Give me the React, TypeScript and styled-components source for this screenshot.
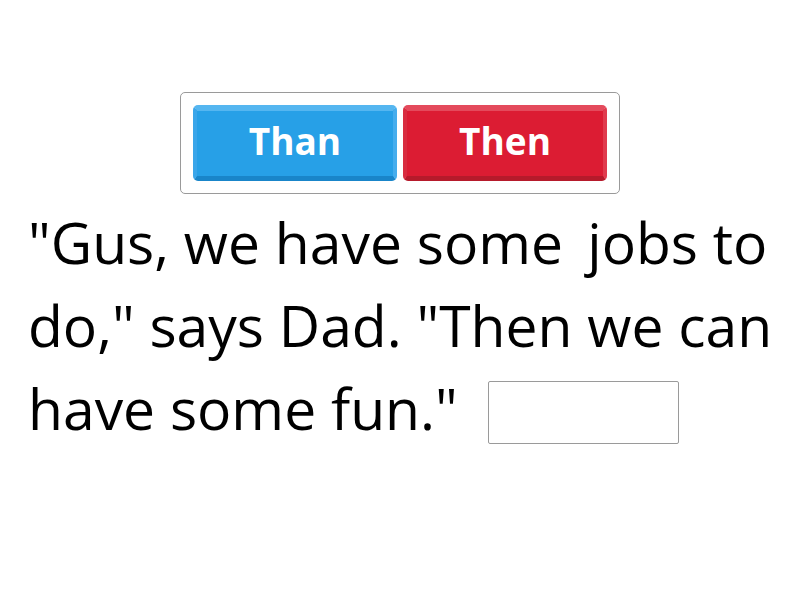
import React from "react";
import styled, { createGlobalStyle } from "styled-components";

const Global = createGlobalStyle`
  html, body { margin: 0; padding: 0; background: #ffffff; }
  body { font-family: "Open Sans", "Liberation Sans", sans-serif; }
`;

const Page = styled.div`
  width: 800px;
  height: 600px;
  display: flex;
  flex-direction: column;
  align-items: center;
  padding-top: 92px;
  box-sizing: border-box;
`;

const Tray = styled.div`
  display: flex;
  gap: 6px;
  padding: 12px;
  border: 1px solid #9a9a9a;
  border-radius: 5px;
`;

const Choice = styled.div<{ $tone: "blue" | "red" }>`
  width: 204px;
  height: 76px;
  box-sizing: border-box;
  display: flex;
  align-items: center;
  justify-content: center;
  border-radius: 5px;
  color: #ffffff;
  font-weight: 700;
  font-size: 37px;
  background: ${(p) => (p.$tone === "blue" ? "#27a0e7" : "#dc1c33")};
  border-style: solid;
  border-width: 6px 4px 5px 4px;
  border-color: ${(p) =>
    p.$tone === "blue"
      ? "#55b6f0 #45aded #1985c9 #3aa6ea"
      : "#e44a5c #e03b4e #b61a2b #d92c40"};
  padding-bottom: 7px;
`;

const Passage = styled.p`
  align-self: stretch;
  margin: 7px 0 0;
  padding: 0 26px 0 28px;
  font-size: 57px;
  line-height: 83px;
  color: #000000;
`;

const Blank = styled.span`
  display: inline-block;
  width: 191px;
  height: 63px;
  box-sizing: border-box;
  margin-left: 30px;
  border: 1px solid #9a9a9a;
  border-radius: 2px;
  vertical-align: middle;
  position: relative;
  top: -2px;
`;

export default function App() {
  return (
    <>
      <Global />
      <Page>
        <Tray>
          <Choice $tone="blue">Than</Choice>
          <Choice $tone="red">Then</Choice>
        </Tray>
        <Passage>
          "Gus, we have some{"\u2009"} jobs to do," says Dad. "Then we can have some fun."
          <Blank />
        </Passage>
      </Page>
    </>
  );
}
